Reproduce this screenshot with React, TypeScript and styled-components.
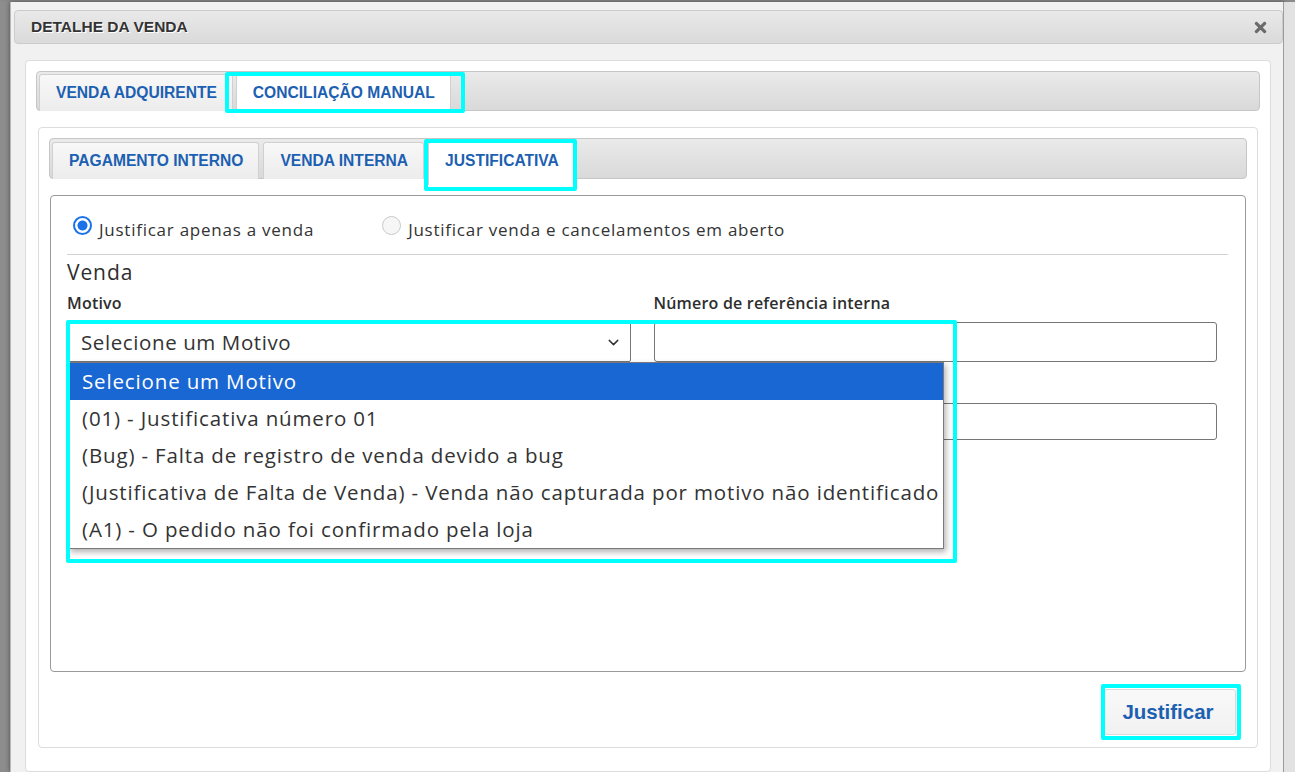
import React from "react";
import styled, { createGlobalStyle, css } from "styled-components";
import { FaTimes } from "react-icons/fa";
import { ChevronDown } from "lucide-react";

const GlobalStyle = createGlobalStyle`
  html, body {
    margin: 0;
    padding: 0;
  }
  body {
    background: #8a8a8a;
    overflow: hidden;
    font-family: "Open Sans", "Noto Sans", sans-serif;
  }
  * {
    box-sizing: border-box;
  }
`;

const UI_FONT = `"Liberation Sans", Arial, sans-serif`;
const LINK_BLUE = "#1c60b2";
const TEXT = "#333333";

/* page behind the dialog */
const Screen = styled.div`
  display: flex;
  height: 772px;
  overflow: hidden;
  background: #8a8a8a;
`;

const Backdrop = styled.div<{ $side: "left" | "right" }>`
  flex: none;
  width: ${(p) => (p.$side === "left" ? "10px" : "11px")};
  margin-top: 2px;
  background: ${(p) => (p.$side === "left" ? "#8d8d8d" : "#e2e2e2")};
`;

const Modal = styled.div`
  flex: 1;
  margin-top: 2px;
  display: flex;
  flex-direction: column;
  background: #f1f1f1;
  border-left: 1px solid #b8b8b8;
  border-right: 1px solid #9c9c9c;
  padding: 8px 0 0 3px;
  box-shadow: 0 0 5px rgba(0, 0, 0, 0.45);
`;

const ModalHeader = styled.header`
  display: flex;
  align-items: center;
  justify-content: space-between;
  height: 34px;
  padding: 0 13px 0 16px;
  border: 1px solid #cbcbcb;
  border-radius: 4px;
  background: linear-gradient(#e9e9e9, #dadada);
`;

const ModalTitle = styled.h1`
  margin: 0;
  font-family: ${UI_FONT};
  font-size: 15.5px;
  font-weight: bold;
  color: ${TEXT};
  text-shadow: 1px 1px 0 #ffffff;
`;

const CloseButton = styled.button`
  display: flex;
  align-items: center;
  justify-content: center;
  padding: 0;
  border: 0;
  background: none;
  color: #6a6a6a;
  font-size: 17px;
  cursor: pointer;
`;

const ModalBody = styled.div`
  flex: 1;
  margin: 16px 12px 0 11px;
  padding: 10px;
  background: #ffffff;
  border: 1px solid #dcdcdc;
  border-radius: 4px;
`;

/* tab strips */
const TabBar = styled.div<{ $inner?: boolean }>`
  display: flex;
  gap: ${(p) => (p.$inner ? "4px" : "3px")};
  height: ${(p) => (p.$inner ? "41px" : "40px")};
  padding: ${(p) => (p.$inner ? "3px 0 0 2px" : "2px 0 0 2px")};
  border: 1px solid #c6c6c6;
  border-radius: 4px;
  background: linear-gradient(#eaeaea, #d9d9d9);
`;

const Tab = styled.div<{ $active?: boolean; $drop?: number; $mark?: string }>`
  position: relative;
  display: flex;
  align-items: center;
  margin-bottom: ${(p) => `-${p.$drop ?? 1}px`};
  padding: 0 15px ${(p) => `${p.$drop ?? 1}px`} 16px;
  border: 1px solid #d0d0d0;
  border-bottom: 0;
  border-radius: 3px 3px 0 0;
  font-family: ${UI_FONT};
  font-size: 15.6px;
  font-weight: bold;
  color: ${LINK_BLUE};
  white-space: nowrap;
  background: ${(p) => (p.$active ? "#ffffff" : "linear-gradient(#f8f8f8, #ececec)")};
  z-index: ${(p) => (p.$active ? 1 : 0)};
  ${(p) =>
    p.$mark &&
    css`
      &::after {
        content: "";
        position: absolute;
        inset: ${p.$mark};
        border: 4px solid #00ffff;
        border-radius: 2px;
        pointer-events: none;
      }
    `}
`;

const TabPanel = styled.section`
  margin: 16px 2px 0;
  padding: 10px;
  border: 1px solid #dcdcdc;
  border-radius: 4px;
  background: #ffffff;
`;

/* the justification form */
const FormBox = styled.div`
  height: 477px;
  margin: 16px 1px 0 1px;
  padding: 21px 17px 0 16px;
  border: 1px solid #9a9a9a;
  border-radius: 4px;
`;

const RadioGroup = styled.div`
  display: flex;
  align-items: center;
  gap: 68px;
  height: 24px;
  padding-left: 6px;
`;

const RadioOption = styled.label`
  display: flex;
  align-items: center;
  gap: 7px;
  font-size: 17px;
  letter-spacing: 0.75px;
  color: ${TEXT};
  cursor: pointer;
`;

const RadioDot = styled.span<{ $checked?: boolean }>`
  flex: none;
  width: 19px;
  height: 19px;
  margin-bottom: 7px;
  border-radius: 50%;
  ${(p) =>
    p.$checked
      ? css`
          border: 2px solid #1a73e8;
          background: radial-gradient(circle, #1a73e8 0 4.6px, #ffffff 5.4px);
        `
      : css`
          border: 1px solid #c9c9c9;
          background: #f6f6f6;
        `}
`;

const Divider = styled.hr`
  margin: 13px 0 0;
  border: 0;
  border-top: 1px solid #d2d2d2;
`;

const SectionTitle = styled.h2`
  margin: 5px 0 0;
  font-size: 21px;
  line-height: 24px;
  font-weight: 500;
  letter-spacing: 0.9px;
  color: #2e2e2e;
`;

const FieldGrid = styled.div`
  display: grid;
  grid-template-columns: 1fr 1fr;
  column-gap: 23px;
  row-gap: 12px;
  margin-top: 9px;
  padding-right: 11px;
`;

const Field = styled.div`
  display: flex;
  flex-direction: column;
  gap: 9px;
`;

const FieldLabel = styled.span`
  min-height: 20px;
  font-size: 16px;
  line-height: 20px;
  font-weight: 600;
  letter-spacing: 0.2px;
  color: #2e2e2e;
`;

const ControlWrap = styled.div`
  position: relative;
`;

const SelectBox = styled.div`
  display: flex;
  align-items: center;
  justify-content: space-between;
  height: 40px;
  padding: 0 8px 0 13px;
  border: 1px solid #767676;
  border-radius: 2px;
  font-size: 20.5px;
  letter-spacing: 0.6px;
  color: ${TEXT};
  background: #ffffff;
`;

const TextInput = styled.input<{ $short?: boolean }>`
  height: ${(p) => (p.$short ? "37px" : "40px")};
  width: 100%;
  border: 1px solid #767676;
  border-radius: 3px;
  font: inherit;
  background: #ffffff;
`;

const OptionList = styled.ul`
  position: absolute;
  top: 100%;
  left: 1px;
  z-index: 5;
  width: 876px;
  margin: 0;
  padding: 0;
  list-style: none;
  background: #ffffff;
  border: 1px solid #7a7a7a;
  box-shadow: 2px 3px 6px rgba(0, 0, 0, 0.3);
`;

const OptionItem = styled.li<{ $selected?: boolean }>`
  height: 37px;
  padding-left: 13px;
  line-height: 37px;
  font-size: 20.5px;
  letter-spacing: 0.85px;
  white-space: nowrap;
  color: ${(p) => (p.$selected ? "#ffffff" : TEXT)};
  background: ${(p) => (p.$selected ? "#1967d2" : "#ffffff")};
`;

const Highlight = styled.span`
  position: absolute;
  top: -2px;
  left: -1px;
  z-index: 6;
  width: 891px;
  height: 243px;
  border: 4px solid #00ffff;
  border-radius: 2px;
  pointer-events: none;
`;

const Actions = styled.div`
  display: flex;
  justify-content: flex-end;
  margin: 17px 11px 2px 0;
`;

const PrimaryButton = styled.button`
  position: relative;
  width: 132px;
  height: 46px;
  padding: 0 4px 0 0;
  border: 1px solid #dadada;
  border-radius: 3px;
  background: linear-gradient(#f9f9f9, #f1f1f1);
  font-family: ${UI_FONT};
  font-size: 20.5px;
  font-weight: bold;
  color: ${LINK_BLUE};
  cursor: pointer;

  &::after {
    content: "";
    position: absolute;
    inset: -6px -6px -6px -4px;
    border: 4px solid #00ffff;
    border-radius: 2px;
    pointer-events: none;
  }
`;

const motivos = [
  "Selecione um Motivo",
  "(01) - Justificativa número 01",
  "(Bug) - Falta de registro de venda devido a bug",
  "(Justificativa de Falta de Venda) - Venda não capturada por motivo não identificado",
  "(A1) - O pedido não foi confirmado pela loja",
];

export default function App() {
  return (
    <>
      <GlobalStyle />
      <Screen>
        <Backdrop $side="left" />
        <Modal>
          <ModalHeader>
            <ModalTitle>DETALHE DA VENDA</ModalTitle>
            <CloseButton aria-label="Fechar">
              <FaTimes />
            </CloseButton>
          </ModalHeader>

          <ModalBody>
            <TabBar>
              <Tab>VENDA ADQUIRENTE</Tab>
              <Tab $active $mark="-3px -15px -2px -12px">
                CONCILIAÇÃO MANUAL
              </Tab>
            </TabBar>

            <TabPanel>
              <TabBar $inner>
                <Tab>PAGAMENTO INTERNO</Tab>
                <Tab>VENDA INTERNA</Tab>
                <Tab $active $drop={7} $mark="-4px -3px -6px -5px">
                  JUSTIFICATIVA
                </Tab>
              </TabBar>

              <FormBox>
                <RadioGroup>
                  <RadioOption>
                    <RadioDot $checked />
                    Justificar apenas a venda
                  </RadioOption>
                  <RadioOption>
                    <RadioDot />
                    Justificar venda e cancelamentos em aberto
                  </RadioOption>
                </RadioGroup>

                <Divider />
                <SectionTitle>Venda</SectionTitle>

                <FieldGrid>
                  <Field>
                    <FieldLabel>Motivo</FieldLabel>
                    <ControlWrap>
                      <SelectBox>
                        Selecione um Motivo
                        <ChevronDown size={17} strokeWidth={2} color="#333" />
                      </SelectBox>
                      <OptionList>
                        {motivos.map((m, i) => (
                          <OptionItem key={m} $selected={i === 0}>
                            {m}
                          </OptionItem>
                        ))}
                      </OptionList>
                      <Highlight />
                    </ControlWrap>
                  </Field>

                  <Field>
                    <FieldLabel>Número de referência interna</FieldLabel>
                    <TextInput />
                  </Field>

                  {/* second row sits under the open option list */}
                  <Field>
                    <FieldLabel />
                    <TextInput $short />
                  </Field>

                  <Field>
                    <FieldLabel />
                    <TextInput $short />
                  </Field>
                </FieldGrid>
              </FormBox>

              <Actions>
                <PrimaryButton>Justificar</PrimaryButton>
              </Actions>
            </TabPanel>
          </ModalBody>
        </Modal>
        <Backdrop $side="right" />
      </Screen>
    </>
  );
}
